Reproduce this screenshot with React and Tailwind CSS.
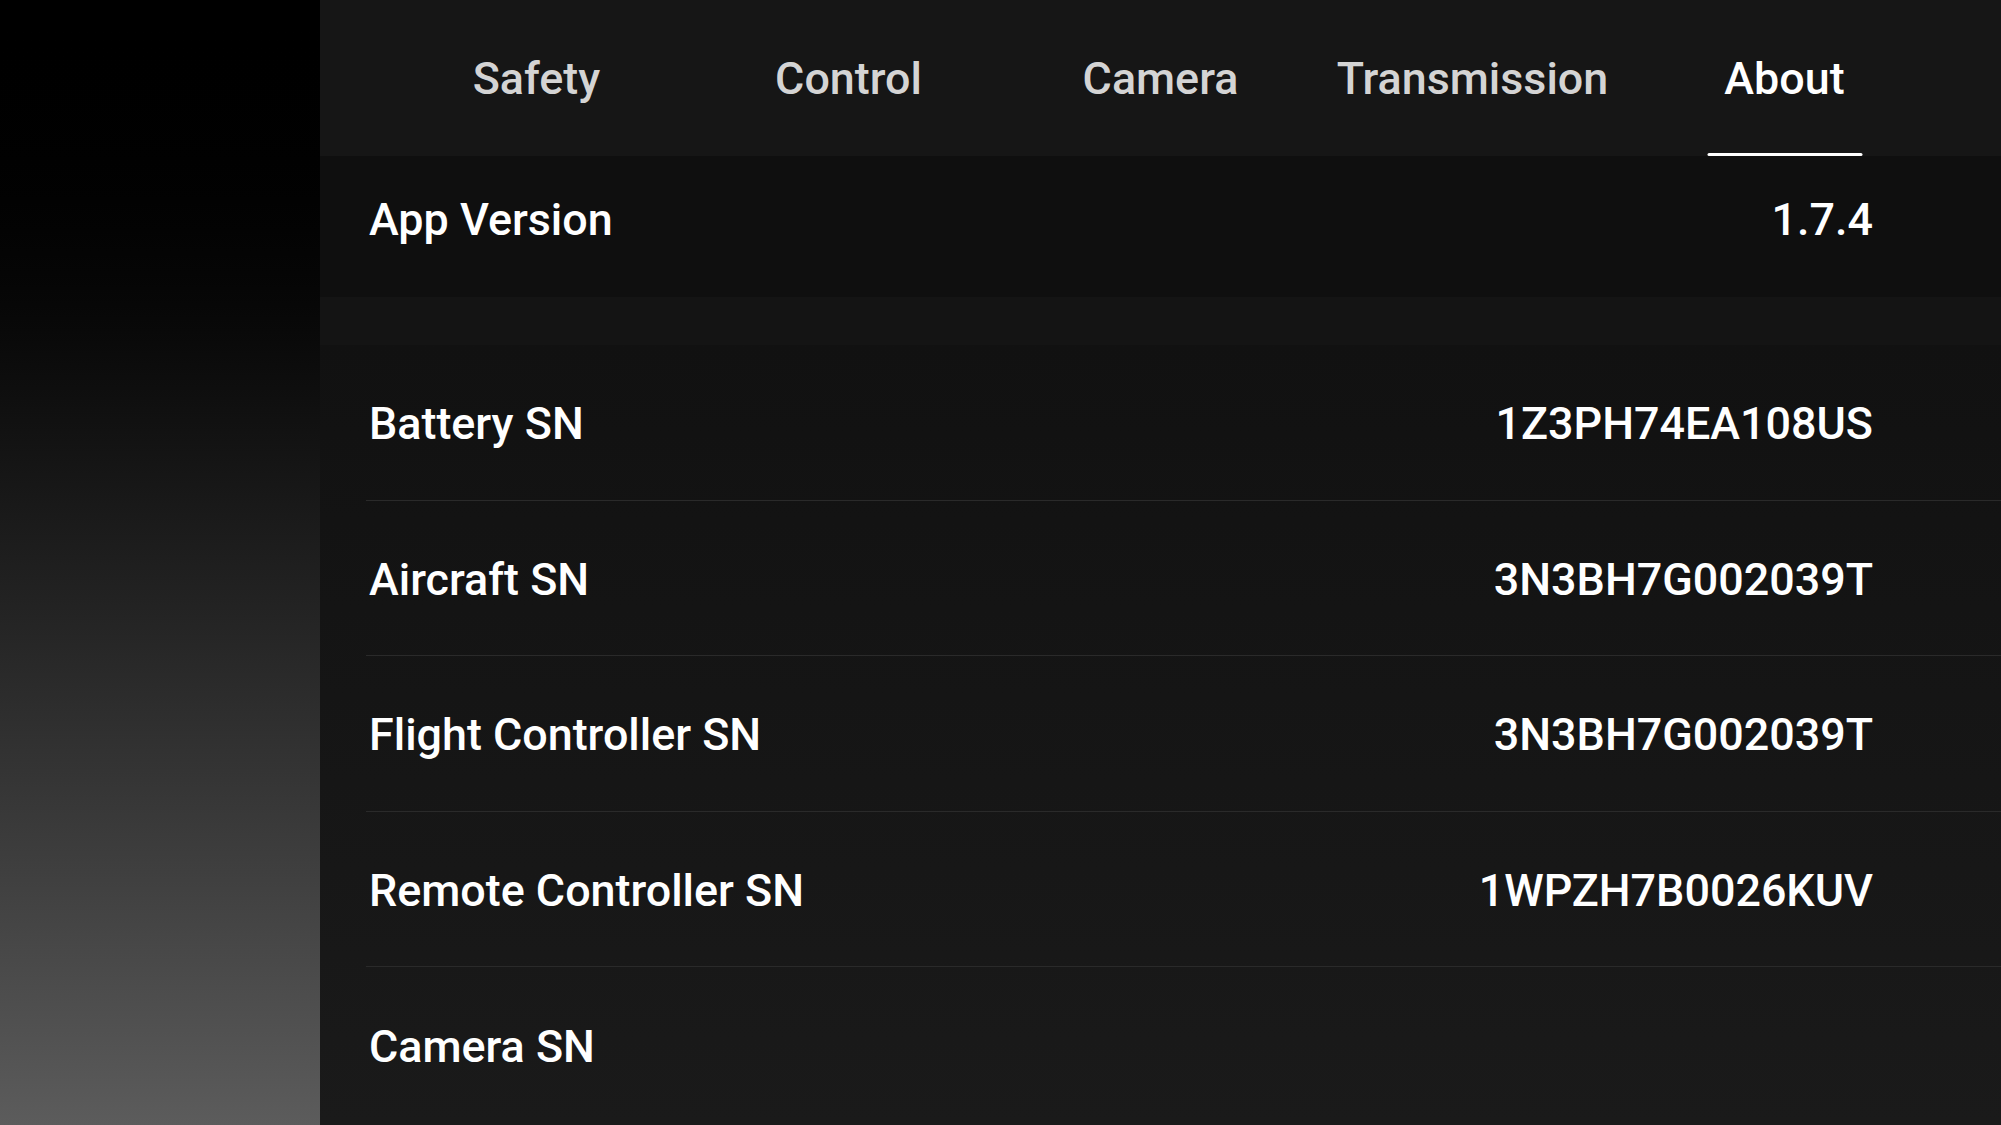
import React from "react";

const tabs = ["Safety", "Control", "Camera", "Transmission", "About"];
const rows = [
  ["Battery SN", "1Z3PH74EA108US"],
  ["Aircraft SN", "3N3BH7G002039T"],
  ["Flight Controller SN", "3N3BH7G002039T"],
  ["Remote Controller SN", "1WPZH7B0026KUV"],
  ["Camera SN", ""],
];

export default function App() {
  return (
    <div
      className="flex h-[1125px] w-[2001px] overflow-hidden"
      style={{ fontFamily: "Roboto, 'Noto Sans', sans-serif" }}
    >
      <div className="h-full w-[320px] shrink-0 bg-gradient-to-b from-[#000000] to-[#5c5c5c]" />
      <div className="flex min-w-0 flex-1 flex-col">
        <div className="flex h-[156px] shrink-0 justify-center bg-[#161616]">
          {tabs.map((t) => {
            const active = t === "About";
            return (
              <div
                key={t}
                className="relative flex w-[312px] items-center justify-center pt-[2px]"
              >
                <span
                  className={
                    active
                      ? "text-[44.85px] font-medium leading-none text-white"
                      : "text-[44.85px] font-medium leading-none text-[#d4d4d4]"
                  }
                >
                  {t}
                </span>
                {active && (
                  <div className="absolute bottom-0 left-1/2 h-[3px] w-[155px] -translate-x-1/2 rounded-full bg-white" />
                )}
              </div>
            );
          })}
        </div>
        <div className="flex h-[141px] shrink-0 items-center justify-between bg-[#0f0f0f] pb-[13px] pl-[49px] pr-[128px]">
          <span className="text-[44.85px] font-medium leading-none text-white">
            App Version
          </span>
          <span className="text-[44.85px] font-medium leading-none text-white">
            1.7.4
          </span>
        </div>
        <div className="h-[48px] shrink-0 bg-[#141414]" />
        <div className="flex flex-1 flex-col bg-gradient-to-b from-[#111111] to-[#1a1a1a] pl-[46px]">
          {rows.map(([label, value]) => (
            <div
              key={label}
              className="flex h-[155.5px] shrink-0 items-center justify-between border-b border-[#2a2a2a] pl-[3px] pr-[128px] pt-[5px] last:border-b-0"
            >
              <span className="text-[44.85px] font-medium leading-none text-white">
                {label}
              </span>
              <span className="text-[44.85px] font-medium leading-none text-white">
                {value}
              </span>
            </div>
          ))}
        </div>
      </div>
    </div>
  );
}
